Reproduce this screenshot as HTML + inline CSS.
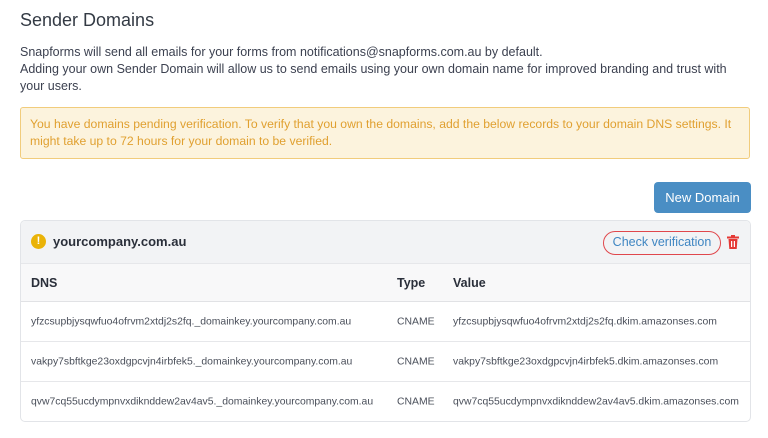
<!DOCTYPE html>
<html><head><style>
*{margin:0;padding:0;box-sizing:border-box}
body{width:768px;height:438px;background:#fff;font-family:"Liberation Sans",sans-serif;color:#3c4150;position:relative;overflow:hidden}
.a{position:absolute}
h1{position:absolute;left:20px;top:10px;font-size:18px;font-weight:normal;color:#333a44}
.p{left:20px;top:44px;width:730px;font-size:12.5px;line-height:17px;color:#3c4150}
.alert{left:20px;top:107px;width:730px;height:52px;background:#fcf3dd;border:1px solid #f1cc7c;border-radius:3px;color:#e0a030;font-size:12.2px;line-height:17px;padding:8px 0 8px 9px;white-space:nowrap}
.btn{left:654px;top:182px;width:97px;height:31px;background:#4a8ec4;border-radius:4px;color:#fff;font-size:13px;text-align:center;line-height:31px}
.card{left:20px;top:220px;width:731px;height:202px;border:1px solid #e2e4e8;border-radius:5px;overflow:hidden;background:#fff}
.hd{height:43px;background:#f2f3f5;border-bottom:1px solid #e6e7ea;position:relative}
.th{height:38px;background:#f8f8f9;border-bottom:1px solid #e1e2e5;position:relative;font-weight:bold;font-size:12.5px;color:#2a2f3a}
.r{height:40px;border-bottom:1px solid #e6e7ea;position:relative;font-size:10.4px;color:#4a4f5a}
.r span,.th span{position:absolute;top:50%;transform:translateY(-50%);white-space:nowrap}
.c1{left:10px}.c2{left:376px}.c3{left:432px}
</style></head><body>
<h1>Sender Domains</h1>
<div class="a p">Snapforms will send all emails for your forms from notifications@snapforms.com.au by default.<br>Adding your own Sender Domain will allow us to send emails using your own domain name for improved branding and trust with your users.</div>
<div class="a alert">You have domains pending verification. To verify that you own the domains, add the below records to your domain DNS settings. It<br>might take up to 72 hours for your domain to be verified.</div>
<div class="a btn">New Domain</div>
<div class="a card">
<div class="hd">
<div class="a" style="left:10px;top:13px;width:15px;height:15px;border-radius:50%;background:#eab308;color:#fff;font-weight:bold;font-size:11px;text-align:center;line-height:15px">!</div>
<div class="a" style="left:32px;top:13px;font-size:13px;font-weight:bold;color:#2a2f3a">yourcompany.com.au</div>
<div class="a" style="left:582px;top:10px;width:118px;height:24px;border:1.5px solid #e0474c;border-radius:12px;color:#3f86c2;font-size:12.5px;text-align:center;line-height:21px">Check verification</div>
<svg class="a" style="left:706px;top:14px" width="12" height="14" viewBox="0 0 12 14"><rect x="0" y="1.5" width="12" height="2" fill="#e53935"/><rect x="4" y="0" width="4" height="2" fill="#e53935"/><path d="M1.5 4h9l-0.8 10h-7.4z" fill="#e53935"/><rect x="4" y="6" width="1.2" height="6" fill="#fff"/><rect x="6.8" y="6" width="1.2" height="6" fill="#fff"/></svg>
</div>
<div class="th"><span class="c1">DNS</span><span class="c2">Type</span><span class="c3">Value</span></div>
<div class="r"><span class="c1">yfzcsupbjysqwfuo4ofrvm2xtdj2s2fq._domainkey.yourcompany.com.au</span><span class="c2">CNAME</span><span class="c3">yfzcsupbjysqwfuo4ofrvm2xtdj2s2fq.dkim.amazonses.com</span></div>
<div class="r"><span class="c1">vakpy7sbftkge23oxdgpcvjn4irbfek5._domainkey.yourcompany.com.au</span><span class="c2">CNAME</span><span class="c3">vakpy7sbftkge23oxdgpcvjn4irbfek5.dkim.amazonses.com</span></div>
<div class="r" style="border-bottom:none"><span class="c1">qvw7cq55ucdympnvxdiknddew2av4av5._domainkey.yourcompany.com.au</span><span class="c2">CNAME</span><span class="c3">qvw7cq55ucdympnvxdiknddew2av4av5.dkim.amazonses.com</span></div>
</div>
</body></html>
